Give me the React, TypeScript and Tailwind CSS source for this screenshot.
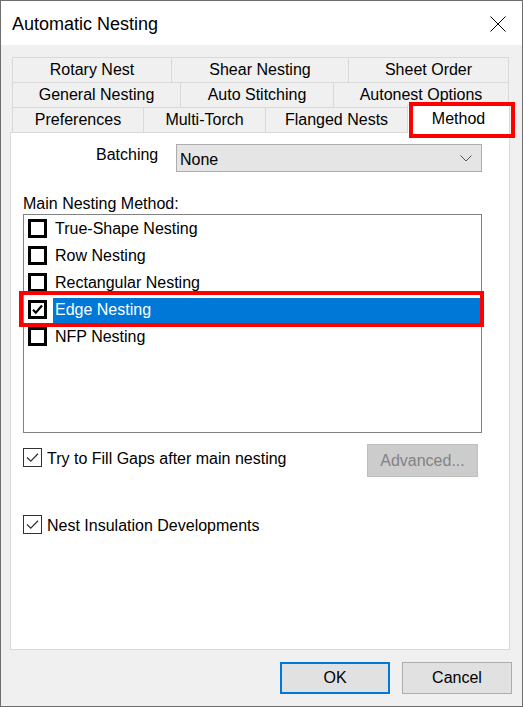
import React from "react";

const tabCls =
  "flex items-center justify-center h-[25px] border-t border-l border-r border-[#d9d9d9] -ml-px first:ml-0 bg-[#f0f0f0] text-black whitespace-nowrap";

function ListCheck({ checked }: { checked?: boolean }) {
  return (
    <div className="w-[19px] h-[19px] border-[3px] border-black bg-white flex items-center justify-center shrink-0">
      {checked && (
        <svg width="13" height="13" viewBox="0 0 13 13">
          <path d="M2 6.8 L4.8 9.6 L11 2.5" fill="none" stroke="black" strokeWidth="2.2" />
        </svg>
      )}
    </div>
  );
}

function SmallCheck() {
  return (
    <div className="w-[19px] h-[19px] border border-[#333] bg-white flex items-center justify-center shrink-0">
      <svg width="15" height="15" viewBox="0 0 15 15">
        <path d="M2 7.5 L5.8 11.2 L13 3.8" fill="none" stroke="#333" strokeWidth="1.3" />
      </svg>
    </div>
  );
}

export default function App() {
  const items = [
    "True-Shape Nesting",
    "Row Nesting",
    "Rectangular Nesting",
    "Edge Nesting",
    "NFP Nesting",
  ];
  return (
    <div className="w-[523px] h-[707px] border border-[#6e6e6e] bg-[#f0f0f0] flex flex-col font-['Liberation_Sans',Arial,sans-serif] text-[16px] leading-[20px] text-black overflow-hidden">
      {/* Title bar */}
      <div className="h-[44px] bg-white flex items-center justify-between pl-[11px] pr-[16px] shrink-0">
        <span className="text-[18px] leading-[22px] mt-[2px]">Automatic Nesting</span>
        <svg width="16" height="16" viewBox="0 0 16 16" className="mt-[1px]">
          <path d="M0.5 0.5 L15.5 15.5 M15.5 0.5 L0.5 15.5" stroke="black" strokeWidth="1" />
        </svg>
      </div>

      {/* Body */}
      <div className="flex flex-col pl-[9px] pr-[10px] pt-[12px]">
        {/* Tabs */}
        <div className="flex flex-col ml-[2px]">
          <div className="flex">
            <div className={`${tabCls} w-[160px]`}>Rotary Nest</div>
            <div className={`${tabCls} w-[178px]`}>Shear Nesting</div>
            <div className={`${tabCls} w-[161px]`}>Sheet Order</div>
          </div>
          <div className="flex">
            <div className={`${tabCls} w-[169px]`}>General Nesting</div>
            <div className={`${tabCls} w-[154px]`}>Auto Stitching</div>
            <div className={`${tabCls} w-[176px]`}>Autonest Options</div>
          </div>
          <div className="flex items-end h-[25px]">
            <div className={`${tabCls} w-[132px]`}>Preferences</div>
            <div className={`${tabCls} w-[123px]`}>Multi-Torch</div>
            <div className={`${tabCls} w-[143px]`}>Flanged Nests</div>
            <div className="relative z-10 -ml-px w-[103px] h-[28px] -mb-px bg-white border-t border-l border-r border-[#d9d9d9] flex items-center justify-center">
              <span className="-mt-[2px]">Method</span>
              <div className="absolute left-[1px] -top-[4px] w-[106px] h-[36px] border-[4px] border-[#ff0000]" />
            </div>
          </div>
        </div>

        {/* Panel */}
        <div className="w-[500px] h-[518px] border border-[#d9d9d9] bg-white flex flex-col">
          {/* Batching */}
          <div className="flex items-start mt-[11px]">
            <div className="ml-[85px] w-[80px] pt-[1px]">Batching</div>
            <div className="w-[306px] h-[28px] bg-[#e5e5e5] border border-[#adadad] flex items-center justify-between pl-[3px] pr-[9px]">
              <span className="mt-[3px]">None</span>
              <svg width="12" height="7" viewBox="0 0 12 7">
                <path d="M0.5 0.5 L6 6 L11.5 0.5" fill="none" stroke="#555" strokeWidth="1" />
              </svg>
            </div>
          </div>

          <div className="ml-[12px] mt-[22px]">Main Nesting Method:</div>

          {/* List box */}
          <div className="ml-[12px] w-[459px] h-[219px] border border-[#828282] bg-white flex flex-col">
            {items.map((t, i) => {
              const sel = i === 3;
              return (
                <div key={t} className="relative h-[27px] flex items-center pl-[4px]">
                  <ListCheck checked={sel} />
                  <div
                    className={
                      sel
                        ? "ml-[6px] flex-1 h-[25px] mt-[1px] bg-[#0078d7] text-white flex items-center pl-[2px]"
                        : "ml-[6px] flex-1 flex items-center pl-[2px]"
                    }
                  >
                    {t}
                  </div>
                  {sel && (
                    <div className="absolute -left-[5px] -right-[3px] -top-[5px] -bottom-[4px] border-[4px] border-[#ff0000]" />
                  )}
                </div>
              );
            })}
          </div>

          {/* Try to fill gaps */}
          <div className="flex justify-between items-start mt-[11px]">
            <div className="flex items-start ml-[12px] mt-[4px]">
              <SmallCheck />
              <span className="ml-[5px] mt-[1px]">Try to Fill Gaps after main nesting</span>
            </div>
            <div className="mr-[31px] w-[111px] h-[33px] bg-[#cccccc] border border-[#bfbfbf] text-[#838383] flex items-center justify-center">
              Advanced...
            </div>
          </div>

          {/* Nest insulation */}
          <div className="flex items-start ml-[12px] mt-[38px]">
            <SmallCheck />
            <span className="ml-[5px] mt-[1px]">Nest Insulation Developments</span>
          </div>
        </div>

        {/* Buttons */}
        <div className="flex justify-end gap-[12px] mt-[12px]">
          <div className="w-[110px] h-[32px] bg-[#e1e1e1] border-2 border-[#0078d7] flex items-center justify-center">
            OK
          </div>
          <div className="w-[110px] h-[32px] bg-[#e1e1e1] border border-[#adadad] flex items-center justify-center">
            Cancel
          </div>
        </div>
      </div>
    </div>
  );
}
